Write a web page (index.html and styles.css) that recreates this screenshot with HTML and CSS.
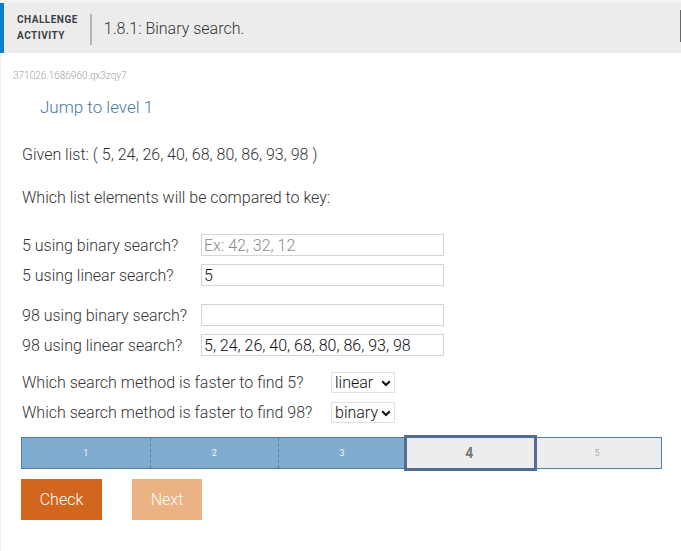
FILE: index.html
```html
<!DOCTYPE html>
<html>
<head>
<meta charset="utf-8">
<link rel="stylesheet" href="styles.css">
</head>
<body>
<div class="topstrip"></div>
<div class="page">
  <div class="header">
    <div class="kind">CHALLENGE<br>ACTIVITY</div>
    <div class="sep"></div>
    <div class="title">1.8.1: Binary search.</div>
  </div>
  <div class="meta">371026.1686960.qx3zqy7</div>
  <div class="jump">Jump to level 1</div>
  <div class="given">Given list: ( 5, 24, 26, 40, 68, 80, 86, 93, 98 )</div>
  <div class="which">Which list elements will be compared to key:</div>

  <div class="qrow first">
    <span class="label">5 using binary search?</span>
    <input class="answer" type="text" placeholder="Ex: 42, 32, 12">
  </div>
  <div class="qrow">
    <span class="label">5 using linear search?</span>
    <input class="answer" type="text" value="5">
  </div>
  <div class="qrow group">
    <span class="label">98 using binary search?</span>
    <input class="answer" type="text" value="">
  </div>
  <div class="qrow">
    <span class="label">98 using linear search?</span>
    <input class="answer" type="text" value="5, 24, 26, 40, 68, 80, 86, 93, 98">
  </div>

  <div class="srow first">
    <span class="slabel">Which search method is faster to find 5?</span>
    <span class="selwrap w64">
      <select class="sel"><option>linear</option><option>binary</option></select>
      <svg class="chev" viewBox="0 0 10 7" width="10" height="7"><path d="M1.2 1.2 L5 5 L8.8 1.2" fill="none" stroke="#111" stroke-width="2"/></svg>
    </span>
  </div>
  <div class="srow">
    <span class="slabel">Which search method is faster to find 98?</span>
    <span class="selwrap w64">
      <select class="sel"><option>binary</option><option>linear</option></select>
      <svg class="chev" viewBox="0 0 10 7" width="10" height="7"><path d="M1.2 1.2 L5 5 L8.8 1.2" fill="none" stroke="#111" stroke-width="2"/></svg>
    </span>
  </div>

  <div class="progress">
    <div class="seg done">1</div>
    <div class="seg done dashed">2</div>
    <div class="seg done dashed">3</div>
    <div class="seg current">4</div>
    <div class="seg todo">5</div>
  </div>

  <div class="buttons">
    <button class="btn check">Check</button>
    <button class="btn next">Next</button>
  </div>
</div>
</body>
</html>
```

FILE: styles.css
```css
html, body {
  margin: 0;
  padding: 0;
  background: #fff;
  font-family: Roboto, "Liberation Sans", sans-serif;
  color: #333;
}
.topstrip {
  height: 3px;
  background: #f3f3f3;
}
.page {
  border-left: 1px solid #ececec;
  height: 548px;
  box-sizing: border-box;
}
.header {
  position: relative;
  height: 50px;
  margin-left: -1px;
  background: #ececec;
  border-left: 4px solid #0b7fcb;
  display: flex;
  align-items: center;
  box-sizing: border-box;
}
.header::after {
  content: "";
  position: absolute;
  right: 0;
  top: 7px;
  width: 1px;
  height: 32px;
  background: #666;
}
.kind {
  margin-left: 13px;
  font-size: 10px;
  font-weight: 700;
  line-height: 16px;
  color: #3a3f44;
  letter-spacing: 0.5px;
}
.sep {
  width: 2px;
  height: 31px;
  background: #b4b4b4;
  margin-left: 12px;
  margin-top: 3px;
}
.title {
  margin-left: 12px;
  font-size: 16px;
  font-weight: 300;
  color: #333;
}
.meta {
  margin-top: 16px;
  margin-left: 12px;
  font-size: 10px;
  font-weight: 300;
  line-height: 14px;
  color: #a0a0a0;
}
.jump {
  margin-top: 14px;
  margin-left: 39px;
  font-size: 17px;
  font-weight: 300;
  line-height: 20px;
  color: #4a7aa5;
}
.given {
  margin-top: 28px;
  margin-left: 21px;
  font-size: 16px;
  line-height: 20px;
  font-weight: 300;
  color: #333;
}
.which {
  margin-top: 23px;
  margin-left: 21px;
  font-size: 16px;
  line-height: 20px;
  font-weight: 300;
  color: #333;
}
.qrow {
  display: flex;
  align-items: center;
  margin-left: 21px;
  height: 22px;
  margin-top: 8px;
}
.qrow.first { margin-top: 26px; }
.qrow.group { margin-top: 18px; }
.label {
  width: 179px;
  font-size: 16px;
  font-weight: 300;
  color: #333;
}
.answer {
  width: 243px;
  height: 22px;
  box-sizing: border-box;
  border: 1px solid #d4d4d4;
  padding: 0 0 0 2px;
  margin: 0;
  font-family: Roboto, "Liberation Sans", sans-serif;
  font-size: 16px;
  font-weight: 300;
  color: #111;
  background: #fff;
  outline: none;
}
.answer::placeholder {
  color: #8a8a8a;
}
.srow {
  display: flex;
  align-items: center;
  margin-left: 21px;
  height: 21px;
  margin-top: 9px;
}
.srow.first { margin-top: 16px; }
.slabel {
  width: 309px;
  font-size: 16px;
  font-weight: 300;
  color: #333;
}
.selwrap {
  position: relative;
  display: inline-block;
  height: 21px;
}
.w64 { width: 64px; }
.sel {
  appearance: none;
  -webkit-appearance: none;
  width: 100%;
  height: 21px;
  box-sizing: border-box;
  border: 1px solid #e2e2e2;
  border-radius: 0;
  background: #fff;
  padding: 0 0 0 3px;
  margin: 0;
  font-family: Roboto, "Liberation Sans", sans-serif;
  font-size: 16px;
  font-weight: 300;
  color: #111;
  line-height: 19px;
}
.chev {
  position: absolute;
  right: 4px;
  top: 8px;
  pointer-events: none;
}
.progress {
  display: grid;
  grid-template-columns: repeat(5, 1fr);
  margin-left: 20px;
  margin-top: 14px;
  width: 641px;
  height: 32px;
  box-sizing: border-box;
  border: 1px solid #4f7ea6;
}
.seg {
  display: flex;
  align-items: center;
  justify-content: center;
  font-size: 9px;
  box-sizing: border-box;
  min-width: 0;
}
.seg.done {
  background: #80acd0;
  color: #f2f6fa;
}
.seg.dashed {
  border-left: 1px dashed #4f7ea6;
}
.seg.current {
  position: relative;
  background: #ededed;
  color: #777;
  font-weight: 700;
  font-size: 14px;
}
.seg.current::before {
  content: "";
  position: absolute;
  left: -1px;
  right: -4px;
  top: -3px;
  bottom: -3px;
  border: 3px solid #546d8e;
}
.seg.todo {
  background: #ededed;
  color: #aaa;
}
.buttons {
  display: flex;
  gap: 30px;
  margin-left: 20px;
  margin-top: 10px;
}
.btn {
  height: 41px;
  border: none;
  border-radius: 0;
  font-family: Roboto, "Liberation Sans", sans-serif;
  font-size: 16px;
  font-weight: 300;
  color: #fff;
  padding: 0;
}
.btn.check {
  width: 81px;
  background: #d3661e;
}
.btn.next {
  width: 70px;
  background: #ebb283;
}
```
